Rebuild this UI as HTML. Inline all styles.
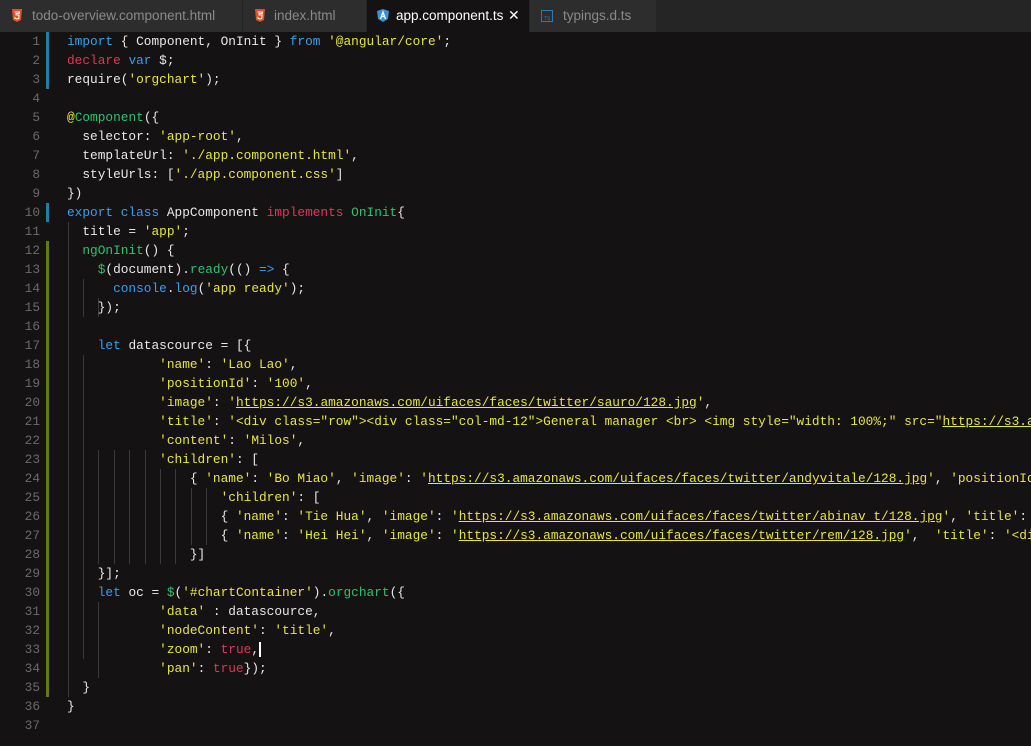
<!DOCTYPE html>
<html><head><meta charset="utf-8"><style>
body{margin:0;width:1031px;height:746px;background:#141213;overflow:hidden;position:relative;font-family:"Liberation Mono",monospace}
.tabs{position:absolute;left:0;top:0;width:1031px;height:32px;background:#252526;font-family:"Liberation Sans",sans-serif;font-size:13.5px}
.tab{position:absolute;top:0;height:32px;line-height:31px;background:#2d2d2d;color:#8a8a8a}
.tab.act{background:#141213;color:#fff}
.ic{position:absolute;top:9px;width:10px;height:13px}
.code{position:absolute;left:0;top:32px;width:1031px;height:714px;overflow:hidden;font-size:12.8px;line-height:19px;white-space:pre;color:#e8e8e8}
.ln{position:absolute;left:0;top:0;width:40px;text-align:right;color:#6a6a6a}
.tx{position:absolute;left:67px;top:0}
.k{color:#3a9fe8}.r{color:#e0365a}.g{color:#2dc26e}.s{color:#e6e63c}.u{color:#e6e63c;text-decoration:underline}
.bar{position:absolute;left:46px;width:3px}
.gd{position:absolute;width:1px;background:#3a3a3a}
</style></head><body>
<div class="tabs">
<div class="tab" style="left:0;width:242px"><svg class="ic" style="left:12px" viewBox="0 0 10 13"><path d="M0 0h10l-1 11-4 2-4-2z" fill="#e44d26"/><path d="M2.5 3h5l-.2 1.5H4l.1 1.5h3l-.3 3.5L5 10l-2-.6-.1-1.5" fill="none" stroke="#fff" stroke-width="1"/></svg><span style="position:absolute;left:32px">todo-overview.component.html</span></div>
<div class="tab" style="left:243px;width:123px"><svg class="ic" style="left:12px" viewBox="0 0 10 13"><path d="M0 0h10l-1 11-4 2-4-2z" fill="#e44d26"/><path d="M2.5 3h5l-.2 1.5H4l.1 1.5h3l-.3 3.5L5 10l-2-.6-.1-1.5" fill="none" stroke="#fff" stroke-width="1"/></svg><span style="position:absolute;left:31px">index.html</span></div>
<div class="tab act" style="left:367px;width:162px"><svg class="ic" style="left:10px;width:12px;height:13px" viewBox="0 0 12 13"><path d="M6 0l6 2-1 8-5 3-5-3-1-8z" fill="#3a8fd6"/><path d="M3.5 10L6 3l2.5 7M4.5 7.5h3" fill="none" stroke="#fff" stroke-width="1.3"/></svg><span style="position:absolute;left:29px">app.component.ts</span><span style="position:absolute;left:141px;font-size:14px">✕</span></div>
<div class="tab" style="left:530px;width:126px"><svg class="ic" style="left:11px;width:12px;height:12px;top:10px" viewBox="0 0 12 12"><rect x=".5" y=".5" width="11" height="11" fill="none" stroke="#2a7ab8"/><text x="3" y="10" font-size="5" fill="#2a7ab8" font-family="Liberation Sans">TS</text></svg><span style="position:absolute;left:33px">typings.d.ts</span></div>
</div>
<div class="bar" style="top:32px;height:57px;background:#1f7fa8"></div>
<div class="bar" style="top:203px;height:19px;background:#1f7fa8"></div>
<div class="bar" style="top:241px;height:456px;background:#5f7d10"></div>
<div class="gd" style="left:68px;top:222px;height:475px"></div>
<div class="gd" style="left:83px;top:279px;height:38px"></div>
<div class="gd" style="left:98px;top:298px;height:19px"></div>
<div class="gd" style="left:83px;top:355px;height:304px"></div>
<div class="gd" style="left:98px;top:450px;height:114px"></div>
<div class="gd" style="left:114px;top:450px;height:114px"></div>
<div class="gd" style="left:129px;top:450px;height:114px"></div>
<div class="gd" style="left:145px;top:450px;height:114px"></div>
<div class="gd" style="left:160px;top:469px;height:95px"></div>
<div class="gd" style="left:175px;top:469px;height:95px"></div>
<div class="gd" style="left:191px;top:488px;height:57px"></div>
<div class="gd" style="left:206px;top:488px;height:57px"></div>
<div class="gd" style="left:98px;top:602px;height:76px"></div>
<div class="code"><div class="ln">1
2
3
4
5
6
7
8
9
10
11
12
13
14
15
16
17
18
19
20
21
22
23
24
25
26
27
28
29
30
31
32
33
34
35
36
37</div><div class="tx"><span class="k">import</span> { Component, OnInit } <span class="k">from</span> <span class="s">'@angular/core'</span>;
<span class="r">declare</span> <span class="k">var</span> $;
require(<span class="s">'orgchart'</span>);

<span class="s">@</span><span class="g">Component</span>({
  selector: <span class="s">'app-root'</span>,
  templateUrl: <span class="s">'./app.component.html'</span>,
  styleUrls: [<span class="s">'./app.component.css'</span>]
})
<span class="k">export class</span> AppComponent <span class="r">implements</span> <span class="g">OnInit</span>{
  title = <span class="s">'app'</span>;
  <span class="g">ngOnInit</span>() {
    <span class="g">$</span>(document).<span class="g">ready</span>(() <span class="k">=&gt;</span> {
      <span class="k">console</span>.<span class="k">log</span>(<span class="s">'app ready'</span>);
    });

    <span class="k">let</span> datascource = [{
            <span class="s">'name'</span>: <span class="s">'Lao Lao'</span>,
            <span class="s">'positionId'</span>: <span class="s">'100'</span>,
            <span class="s">'image'</span>: <span class="s">'</span><span class="u">https://s3.amazonaws.com/uifaces/faces/twitter/sauro/128.jpg</span><span class="s">'</span>,
            <span class="s">'title'</span>: <span class="s">'&lt;div class="row"&gt;&lt;div class="col-md-12"&gt;General manager &lt;br&gt; &lt;img style="width: 100%;" src="</span><span class="u">https://s3.amazonaws.com</span>
            <span class="s">'content'</span>: <span class="s">'Milos'</span>,
            <span class="s">'children'</span>: [
                { <span class="s">'name'</span>: <span class="s">'Bo Miao'</span>, <span class="s">'image'</span>: <span class="s">'</span><span class="u">https://s3.amazonaws.com/uifaces/faces/twitter/andyvitale/128.jpg</span><span class="s">'</span>, <span class="s">'positionId'</span>
                    <span class="s">'children'</span>: [
                    { <span class="s">'name'</span>: <span class="s">'Tie Hua'</span>, <span class="s">'image'</span>: <span class="s">'</span><span class="u">https://s3.amazonaws.com/uifaces/faces/twitter/abinav_t/128.jpg</span><span class="s">'</span>, <span class="s">'title'</span>: <span class="s">'&lt;div'</span>
                    { <span class="s">'name'</span>: <span class="s">'Hei Hei'</span>, <span class="s">'image'</span>: <span class="s">'</span><span class="u">https://s3.amazonaws.com/uifaces/faces/twitter/rem/128.jpg</span><span class="s">'</span>,  <span class="s">'title'</span>: <span class="s">'&lt;div'</span>
                }]
    }];
    <span class="k">let</span> oc = <span class="g">$</span>(<span class="s">'#chartContainer'</span>).<span class="g">orgchart</span>({
            <span class="s">'data'</span> : datascource,
            <span class="s">'nodeContent'</span>: <span class="s">'title'</span>,
            <span class="s">'zoom'</span>: <span class="r">true</span>,<span style="border-left:2px solid #fff"></span>
            <span class="s">'pan'</span>: <span class="r">true</span>});
  }
}</div></div>
</body></html>
